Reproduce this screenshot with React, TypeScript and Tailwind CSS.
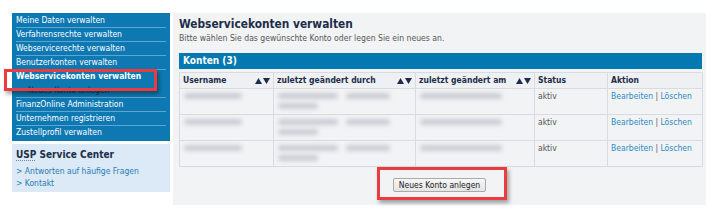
import React from "react";

const font = { fontFamily: '"DejaVu Sans Condensed", "DejaVu Sans", Verdana, sans-serif' };

function SortIcon() {
  return (
    <span className="ml-auto flex items-center gap-[1px] text-[#1c2d4a]">
      <svg width="7" height="6" viewBox="0 0 7 6"><path d="M3.5 0L7 6H0z" fill="currentColor" /></svg>
      <svg width="7" height="6" viewBox="0 0 7 6"><path d="M0 0h7L3.5 6z" fill="currentColor" /></svg>
    </span>
  );
}

function Smudge({ w, className = "" }: { w: number; className?: string }) {
  return <div className={`h-[6px] rounded-full bg-[#c9cdd3] blur-[2px] ${className}`} style={{ width: w }} />;
}

const menu: { label: string; bold?: boolean; sub?: boolean; sep: boolean }[] = [
  { label: "Meine Daten verwalten", sep: true },
  { label: "Verfahrensrechte verwalten", sep: true },
  { label: "Webservicerechte verwalten", sep: true },
  { label: "Benutzerkonten verwalten", sep: true },
  { label: "Webservicekonten verwalten", bold: true, sep: false },
  { label: "Neues Konto anlegen", sub: true, sep: true },
  { label: "FinanzOnline Administration", sep: true },
  { label: "Unternehmen registrieren", sep: true },
  { label: "Zustellprofil verwalten", sep: false },
];

export default function App() {
  return (
    <div className="relative h-[216px] w-[714px] overflow-hidden bg-white" style={font}>
      <div className="flex gap-[3px] pl-[12px] pt-[13px]">
        {/* Sidebar */}
        <div className="flex w-[158px] flex-col gap-[3px]">
          <div className="bg-[#0d78b2] px-[4px] py-[1px]">
            {menu.map((m) => (
              <div
                key={m.label}
                className={`h-[14px] ${m.sep ? "border-b border-[#5ea6d2]" : "border-b border-transparent"}`}
              >
                <div
                  className={`truncate text-[8.5px] leading-[13px] ${
                    m.bold ? "font-bold text-white" : m.sub ? "pl-[12px] text-[#163a5c]" : "text-white"
                  }`}
                >
                  {m.label}
                </div>
              </div>
            ))}
          </div>
          <div className="h-[48px] bg-[#dbeaf6] px-[4px] pt-[4px]">
            <div className="text-[10px] font-bold leading-[14px] text-[#1c2d4a]">
              <span className="underline decoration-dotted decoration-[#7a8699] underline-offset-2">USP</span> Service Center
            </div>
            <div className="mt-[3px] text-[8.5px] leading-[12px] text-[#2a7ab8]">&gt; Antworten auf häufige Fragen</div>
            <div className="text-[8.5px] leading-[12px] text-[#2a7ab8]">&gt; Kontakt</div>
          </div>
        </div>

        {/* Main */}
        <div className="h-[192px] w-[533px] bg-[#f2f3f5] px-[6px] pt-[3px]">
          <div className="text-[11.8px] font-bold leading-[16px] text-[#1c2d4a]">Webservicekonten verwalten</div>
          <div className="mt-[1px] text-[8.6px] leading-[11px] text-[#555]">
            Bitte wählen Sie das gewünschte Konto oder legen Sie ein neues an.
          </div>
          <div className="mt-[9px] h-[16px] w-[523px] bg-[#0478b0] pl-[4px] text-[10px] font-bold leading-[16px] text-white">
            Konten (3)
          </div>
          <table className="mt-[3px] w-[523px] table-fixed border-collapse text-[8.5px] text-[#1c2d4a]">
            <colgroup>
              <col className="w-[94px]" />
              <col className="w-[142px]" />
              <col className="w-[119px]" />
              <col className="w-[73px]" />
              <col className="w-[95px]" />
            </colgroup>
            <thead>
              <tr className="h-[16px] bg-[#eef0f3]">
                {["Username", "zuletzt geändert durch", "zuletzt geändert am"].map((h) => (
                  <th key={h} className="border border-[#d9dcdf] px-[3px] text-left font-bold">
                    <div className="flex items-center">
                      <span>{h}</span>
                      <SortIcon />
                    </div>
                  </th>
                ))}
                <th className="border border-[#d9dcdf] px-[3px] text-left font-bold">Status</th>
                <th className="border border-[#d9dcdf] px-[3px] text-left font-bold">Aktion</th>
              </tr>
            </thead>
            <tbody>
              {[0, 1, 2].map((i) => (
                <tr key={i} className="h-[26px]">
                  <td className="border border-[#d9dcdf] px-[4px] pt-[4px] align-top">
                    <Smudge w={58} />
                  </td>
                  <td className="border border-[#d9dcdf] px-[4px] pt-[4px] align-top">
                    <div className="flex gap-[8px]">
                      <Smudge w={60} />
                      <Smudge w={44} />
                    </div>
                    <Smudge w={40} className="mt-[4px]" />
                  </td>
                  <td className="border border-[#d9dcdf] px-[4px] pt-[4px] align-top">
                    <Smudge w={82} />
                  </td>
                  <td className="border border-[#d9dcdf] px-[3px] pt-[1px] align-top text-[#555]">aktiv</td>
                  <td className="border border-[#d9dcdf] px-[3px] pt-[1px] align-top">
                    <span className="text-[#2a8ac4]">Bearbeiten</span>
                    <span className="text-[#555]"> | </span>
                    <span className="text-[#2a8ac4]">Löschen</span>
                  </td>
                </tr>
              ))}
            </tbody>
          </table>
          <div className="mt-[11px] flex justify-center">
            <button className="h-[14px] rounded-[2px] border border-[#a9a9a9] bg-gradient-to-b from-[#f7f7f7] to-[#e4e4e4] px-[5px] text-[8.5px] leading-[12px] text-[#222]">
              Neues Konto anlegen
            </button>
          </div>
        </div>
      </div>

      {/* Annotation overlays */}
      <div className="absolute left-[4px] top-[69px] h-[22px] w-[153px] border-[3px] border-[#ea3b3f] shadow-[2px_3px_4px_rgba(0,0,0,0.35)]" />
      <div className="absolute left-[377px] top-[167px] h-[33px] w-[130px] border-[3px] border-[#ea3b3f] shadow-[2px_3px_4px_rgba(0,0,0,0.35)]" />
    </div>
  );
}
